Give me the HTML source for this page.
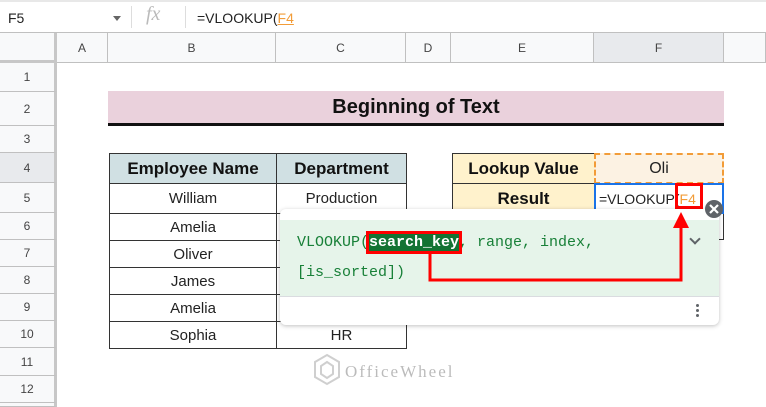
<!DOCTYPE html>
<html><head><meta charset="utf-8"><style>
*{margin:0;padding:0;box-sizing:border-box}
body{width:766px;height:407px;overflow:hidden;background:#fff;font-family:"Liberation Sans",Arial,sans-serif;position:relative}
.a{position:absolute}
.ch{position:absolute;top:33px;height:30px;background:#f8f9fa;border-right:1px solid #c0c0c0;border-bottom:1px solid #c0c0c0;font-size:12px;color:#444;text-align:center;line-height:30px}
.rh{position:absolute;left:0;width:57px;background:#f8f9fa;border-right:3px solid #c7c7c7;border-bottom:1px solid #c0c0c0;font-size:12px;color:#444;text-align:center}
.c{position:absolute;text-align:center;font-size:15px;color:#222;border:1px solid #333;display:flex;align-items:center;justify-content:center}
.mono{font-family:"Liberation Mono","DejaVu Sans Mono",monospace}
</style></head><body>
<div class="a" style="left:0;top:0;width:766px;height:33px;border-bottom:1px solid #c0c0c0;border-top:2px solid #e8e8e8"></div>
<div class="a" style="left:8px;top:10px;font-size:14px;color:#222">F5</div>
<div class="a" style="left:113px;top:16px;width:0;height:0;border-left:4px solid transparent;border-right:4px solid transparent;border-top:5px solid #666"></div>
<div class="a" style="left:131px;top:6px;width:1px;height:22px;background:#ddd"></div>
<div class="a" style="left:146px;top:3px;font-size:20px;color:#bbb;font-family:'Liberation Serif',serif;font-style:italic">fx</div>
<div class="a" style="left:185px;top:6px;width:1px;height:22px;background:#ddd"></div>
<div class="a" style="left:197px;top:10px;font-size:14px;color:#222">=VLOOKUP(<span style="color:#f29c38;text-decoration:underline">F4</span></div>
<div class="a" style="left:0;top:33px;width:57px;height:30px;background:#f8f9fa;border-right:3px solid #c7c7c7;border-bottom:3px solid #c7c7c7"></div>
<div class="ch" style="left:57px;width:51px">A</div>
<div class="ch" style="left:108px;width:168px">B</div>
<div class="ch" style="left:276px;width:130px">C</div>
<div class="ch" style="left:406px;width:45px">D</div>
<div class="ch" style="left:451px;width:143px">E</div>
<div class="ch" style="left:594px;width:130px;background:#e8eaed">F</div>
<div class="ch" style="left:724px;width:42px"></div>
<div class="rh" style="top:63px;height:29px;line-height:29px">1</div>
<div class="rh" style="top:92px;height:34px;line-height:34px">2</div>
<div class="rh" style="top:126px;height:27px;line-height:27px">3</div>
<div class="rh" style="top:153px;height:30px;line-height:30px;background:#e8eaed">4</div>
<div class="rh" style="top:183px;height:30px;line-height:30px">5</div>
<div class="rh" style="top:213px;height:27px;line-height:27px">6</div>
<div class="rh" style="top:240px;height:27px;line-height:27px">7</div>
<div class="rh" style="top:267px;height:27px;line-height:27px">8</div>
<div class="rh" style="top:294px;height:27px;line-height:27px">9</div>
<div class="rh" style="top:321px;height:27px;line-height:27px">10</div>
<div class="rh" style="top:348px;height:28px;line-height:28px">11</div>
<div class="rh" style="top:376px;height:27px;line-height:27px">12</div>
<div class="rh" style="top:403px;height:4px"></div>
<div class="a" style="left:108px;top:91px;width:616px;height:35px;background:#ead1dc;border-bottom:3px solid #111;text-align:center;font-weight:bold;font-size:20px;line-height:33px;color:#111">Beginning of Text</div>
<div class="c" style="left:109px;top:153px;width:168px;height:31px;background:#d0e0e3;font-weight:bold;font-size:17px;color:#111">Employee Name</div>
<div class="c" style="left:276px;top:153px;width:131px;height:31px;background:#d0e0e3;font-weight:bold;font-size:17px;color:#111">Department</div>
<div class="c" style="left:109px;top:183px;width:168px;height:31px">William</div>
<div class="c" style="left:276px;top:183px;width:131px;height:31px">Production</div>
<div class="c" style="left:109px;top:213px;width:168px;height:28px">Amelia</div>
<div class="c" style="left:276px;top:213px;width:131px;height:28px"></div>
<div class="c" style="left:109px;top:240px;width:168px;height:28px">Oliver</div>
<div class="c" style="left:276px;top:240px;width:131px;height:28px"></div>
<div class="c" style="left:109px;top:267px;width:168px;height:28px">James</div>
<div class="c" style="left:276px;top:267px;width:131px;height:28px"></div>
<div class="c" style="left:109px;top:294px;width:168px;height:28px">Amelia</div>
<div class="c" style="left:276px;top:294px;width:131px;height:28px"></div>
<div class="c" style="left:109px;top:321px;width:168px;height:28px">Sophia</div>
<div class="c" style="left:276px;top:321px;width:131px;height:28px">HR</div>
<div class="c" style="left:452px;top:153px;width:143px;height:31px;background:#fff2cc;font-weight:bold;font-size:17px;color:#111">Lookup Value</div>
<div class="c" style="left:594px;top:153px;width:130px;height:31px;background:#fcf2e3;border:2px dashed #f29c38;font-size:16px">Oli</div>
<div class="c" style="left:452px;top:183px;width:143px;height:31px;background:#fff2cc;font-weight:bold;font-size:17px;color:#111">Result</div>
<div class="c" style="left:452px;top:213px;width:143px;height:27px"></div>
<div class="c" style="left:594px;top:213px;width:130px;height:27px"></div>
<div class="a" style="left:594px;top:183px;width:130px;height:31px;background:#fff;border:2px solid #1a73e8;font-size:14px;color:#222;padding:6px 0 0 3px">=VLOOKUP(<span style="color:#f29c38">F4</span></div>
<div class="a" style="left:675px;top:183px;width:28px;height:26px;border:3px solid #f00"></div>
<div class="a" style="left:280px;top:209px;width:439px;height:116px;background:#fff;border-radius:6px;box-shadow:0 1px 4px rgba(0,0,0,.25);overflow:hidden">
 <div class="a" style="left:0;top:11px;width:439px;height:77px;background:#e6f4ea;border-bottom:1px solid #dadce0"></div>
 <div class="a mono" style="left:17px;top:19px;font-size:15px;color:#188038;line-height:30px;white-space:nowrap">VLOOKUP(<span style="background:#137333;color:#fff;font-weight:bold;outline:3px solid #f00;outline-offset:0px">search_key</span>, range, index,<br>[is_sorted])</div>
 <div class="a" style="left:411px;top:26px;width:8px;height:8px;border-right:2px solid #5f6368;border-bottom:2px solid #5f6368;transform:rotate(45deg)"></div>
 <div class="a" style="left:416px;top:95px;width:3px;height:3px;background:#5f6368;border-radius:50%;box-shadow:0 5px 0 #5f6368,0 10px 0 #5f6368"></div>
</div>
<svg class="a" style="left:0;top:0" width="766" height="407">
 <polyline points="430,251 430,280 681,280 681,226" fill="none" stroke="#f00" stroke-width="3"/>
 <polygon points="673,228 689,228 681,212" fill="#f00"/>
 <circle cx="714" cy="209" r="9" fill="#5f6368"/>
 <path d="M710,205 L718,213 M718,205 L710,213" stroke="#fff" stroke-width="2.2"/>
 <g opacity="0.35" stroke="#777" fill="none" stroke-width="2">
  <polygon points="327,355 339,362 339,377 327,384 315,377 315,362"/>
  <polygon points="327,362 333,366 333,374 327,378 321,374 321,366"/>
 </g>
 <text x="345" y="377" font-family="Liberation Serif,serif" font-size="17" fill="#bbb" letter-spacing="2">OfficeWheel</text>
</svg>
</body></html>
